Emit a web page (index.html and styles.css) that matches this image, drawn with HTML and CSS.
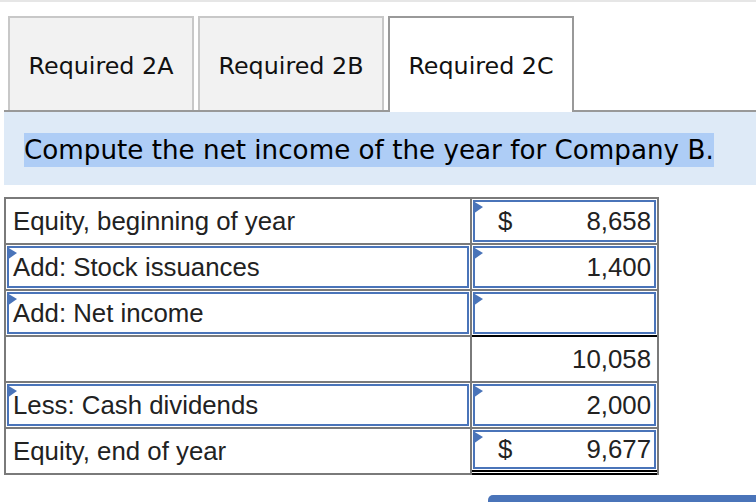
FILE: index.html
```html
<!DOCTYPE html>
<html>
<head>
<meta charset="utf-8">
<link rel="stylesheet" href="styles.css">
</head>
<body>
<div class="topline"></div>
<div class="page">
  <div class="tabs">
    <div class="tab">Required 2A</div>
    <div class="tab">Required 2B</div>
    <div class="tab active">Required 2C</div>
  </div>
  <div class="prompt"><span class="sel">Compute the net income of the year for Company B.</span></div>
  <div class="sheet">
    <div class="cell lab"><span class="txt">Equity, beginning of year</span></div>
    <div class="cell val"><div class="inp num"><span>$</span><span>8,658</span></div></div>

    <div class="cell lab"><div class="inp text">Add: Stock issuances</div></div>
    <div class="cell val"><div class="inp num end"><span>1,400</span></div></div>

    <div class="cell lab"><div class="inp text">Add: Net income</div></div>
    <div class="cell val total"><div class="inp num end"></div></div>

    <div class="cell lab"></div>
    <div class="cell val"><div class="plain"><span>10,058</span></div></div>

    <div class="cell lab"><div class="inp text">Less: Cash dividends</div></div>
    <div class="cell val"><div class="inp num end"><span>2,000</span></div></div>

    <div class="cell lab last"><span class="txt">Equity, end of year</span></div>
    <div class="cell val last grand"><div class="inp num"><span>$</span><span>9,677</span></div></div>
  </div>
  <div class="actions"><div class="btn"></div></div>
</div>
</body>
</html>
```

FILE: styles.css
```css
html, body {
  margin: 0;
  padding: 0;
  background: #fff;
  overflow: hidden;
}

.topline {
  height: 2px;
  background: #e6e6e6;
}

.page {
  padding-left: 4px;
}

.tabs {
  display: flex;
  gap: 4px;
  padding-left: 4px;
  margin-top: 14px;
  height: 94px;
  align-items: flex-start;
  border-bottom: 2px solid #999;
}

.tab {
  box-sizing: border-box;
  width: 186px;
  height: 94px;
  border: 2px solid #c8c8c8;
  border-bottom: 0;
  background: #f2f2f2;
  display: flex;
  align-items: center;
  justify-content: center;
  padding-top: 4px;
  font-family: "DejaVu Sans", Verdana, sans-serif;
  font-size: 23.8px;
  color: #111;
}

.tab.active {
  height: 96px;
  margin-bottom: -2px;
  background: #fff;
  border-color: #999;
  padding-bottom: 2px;
}

.prompt {
  height: 73px;
  background: #deeaf7;
  padding-left: 20px;
  padding-top: 3px;
  box-sizing: border-box;
  display: flex;
  align-items: center;
}

.sel {
  display: inline-block;
  background: #aecdf6;
  line-height: 34px;
  font-family: "DejaVu Sans", Verdana, sans-serif;
  font-size: 26.2px;
  color: #000;
}

.sheet {
  margin-top: 12px;
  width: 655px;
  box-sizing: border-box;
  border: 2px solid #7a7a7a;
  border-bottom: 0;
  display: grid;
  grid-template-columns: 466px 185px;
  grid-auto-rows: 46px;
  font-family: "Liberation Sans", Arial, sans-serif;
  font-size: 25.8px;
  color: #222;
}

.cell {
  box-sizing: border-box;
  border-bottom: 2px solid #7a7a7a;
  padding: 1px;
  display: flex;
}

.cell.lab {
  border-right: 2px solid #7a7a7a;
}

.cell.total {
  border-bottom-color: #000;
}

.cell.grand {
  border-bottom: 5px double #000;
}

.txt {
  align-self: center;
  padding-left: 6px;
}

.inp {
  position: relative;
  flex: 1;
  box-sizing: border-box;
  border: 2px solid #4a74b9;
  display: flex;
  align-items: center;
}

.inp::before {
  content: "";
  position: absolute;
  top: -1px;
  left: -2px;
  width: 0;
  height: 0;
  border-left: 10px solid #4a74b9;
  border-top: 6px solid transparent;
  border-bottom: 7px solid transparent;
}

.inp.text {
  padding-left: 4px;
}

.inp.num {
  justify-content: space-between;
  padding-left: 23px;
  padding-right: 3px;
}

.inp.num.end {
  justify-content: flex-end;
}

.plain {
  flex: 1;
  display: flex;
  align-items: center;
  justify-content: flex-end;
  padding-right: 5px;
}

.actions {
  margin-top: 20px;
  display: flex;
  justify-content: flex-end;
}

.btn {
  width: 268px;
  height: 7px;
  background: #4a74b9;
  border-radius: 5px 0 0 0;
}
```
